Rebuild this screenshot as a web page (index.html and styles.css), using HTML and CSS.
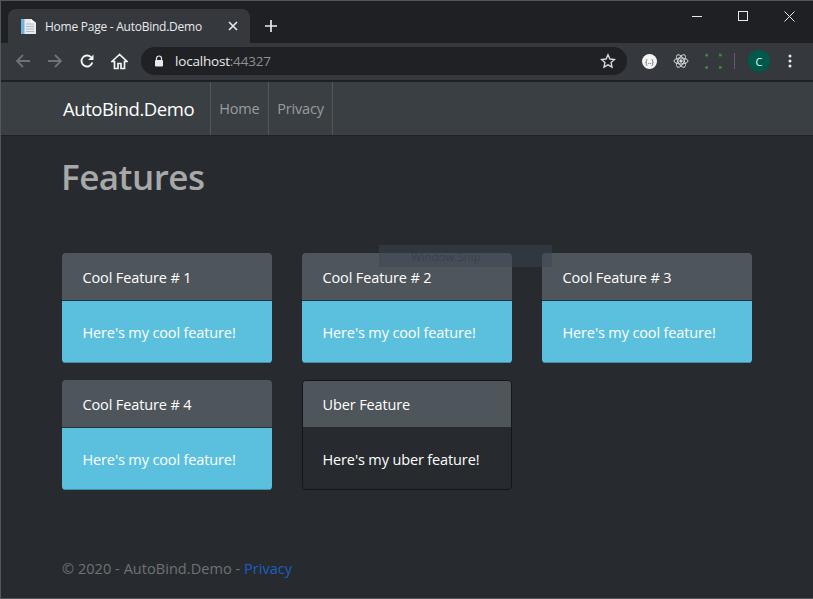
FILE: index.html
```html
<!DOCTYPE html>
<html lang="en">
<head>
<meta charset="utf-8">
<title>Home Page - AutoBind.Demo</title>
<link rel="stylesheet" href="styles.css">
</head>
<body>
<div class="window">
  <header class="tabstrip">
    <div class="tab">
      <svg class="favicon" width="17" height="17" viewBox="0 0 17 17"><path d="M1 1h10l5 4v11H1z" fill="#e8eaed"/><path d="M1 1h3.500v15H1z" fill="#6fb4e0"/><path d="M11 1l5 4h-5z" fill="#fff"/><path d="M6 6h8M6 8.500h8M6 11h8M6 13.500h8" stroke="#b4b8bd" stroke-width="1"/></svg>
      <span class="tab-title">Home Page - AutoBind.Demo</span>
      <svg class="tab-close" width="10" height="10" viewBox="0 0 10 10"><path d="M1 1l8 8M9 1l-8 8" stroke="#e8eaed" stroke-width="1.600"/></svg>
    </div>
    <svg class="new-tab" width="12" height="12" viewBox="0 0 12 12"><path d="M6 0v12M0 6h12" stroke="#e8eaed" stroke-width="1.700"/></svg>
    <div class="window-controls">
      <svg width="11" height="11" viewBox="0 0 11 11"><path d="M0 5.500h10" stroke="#e8eaed" stroke-width="1"/></svg>
      <svg width="11" height="11" viewBox="0 0 11 11"><rect x=".5" y=".5" width="9" height="9" fill="none" stroke="#e8eaed" stroke-width="1"/></svg>
      <svg width="11" height="11" viewBox="0 0 11 11"><path d="M.5.500l10 10M10.500.500l-10 10" stroke="#e8eaed" stroke-width="1"/></svg>
    </div>
  </header>
  <div class="toolbar">
    <svg class="tool-ic" width="16" height="16" viewBox="0 0 16 16"><path d="M15 8H2M8 2L2 8l6 6" fill="none" stroke="#6f7276" stroke-width="1.800"/></svg>
    <svg class="tool-ic" width="16" height="16" viewBox="0 0 16 16"><path d="M1 8h13M8 2l6 6-6 6" fill="none" stroke="#6f7276" stroke-width="1.800"/></svg>
    <svg class="tool-ic" width="16" height="16" viewBox="0 0 16 16"><path d="M13.300 9.500A5.500 5.500 0 1 1 12 4.200" fill="none" stroke="#f1f3f4" stroke-width="1.900"/><path d="M14.500 1.500v5.500H9z" fill="#f1f3f4"/></svg>
    <svg class="tool-ic" width="17" height="17" viewBox="0 0 17 17"><path d="M8.500 1.500L1 8.500h2.500v7H7v-5h3v5h3.500v-7H16z" fill="none" stroke="#f1f3f4" stroke-width="1.700"/></svg>
    <div class="omnibox">
      <svg width="10" height="12" viewBox="0 0 10 12"><path d="M2.500 5V3.500a2.500 2.500 0 0 1 5 0V5" fill="none" stroke="#e8eaed" stroke-width="1.200"/><rect x="1" y="5" width="8" height="6.500" rx="1" fill="#e8eaed"/></svg>
      <span class="url"><span class="host">localhost</span><span class="port">:44327</span></span>
      <svg class="star" width="16" height="16" viewBox="0 0 16 16"><path d="M8 1.800l1.900 4.200 4.600.5-3.400 3.100.9 4.500L8 11.800l-4 2.300.9-4.500L1.500 6.500 6.100 6z" fill="none" stroke="#d8dadd" stroke-width="1.400"/></svg>
    </div>
    <div class="extensions">
      <span class="ext-dot"><span class="ext-dot-text">{..}</span></span>
      <svg width="16" height="16" viewBox="0 0 16 16" fill="none" stroke="#d8dadd" stroke-width="1"><ellipse cx="8" cy="8" rx="7" ry="3"/><ellipse cx="8" cy="8" rx="7" ry="3" transform="rotate(60 8 8)"/><ellipse cx="8" cy="8" rx="7" ry="3" transform="rotate(120 8 8)"/><circle cx="8" cy="8" r="1.200" fill="#d8dadd"/></svg>
      <svg class="ext-frame" width="17" height="17" viewBox="0 0 17 17" fill="none" stroke="#3f8a3c" stroke-width="1.500"><path d="M0 2.500h3M14 2.500h3M0 14.500h3M14 14.500h3M2 .5v3M15 .5v3M2 13v3M15 13v3"/></svg>
      <span class="ext-sep"></span>
      <span class="avatar">C</span>
      <svg class="menu-dots" width="4" height="14" viewBox="0 0 4 14"><circle cx="2" cy="2" r="1.500" fill="#e8eaed"/><circle cx="2" cy="7" r="1.500" fill="#e8eaed"/><circle cx="2" cy="12" r="1.500" fill="#e8eaed"/></svg>
    </div>
  </div>
  <div class="page">
    <nav class="navbar">
      <a class="brand">AutoBind.Demo</a>
      <a class="nav-link">Home</a>
      <a class="nav-link">Privacy</a>
    </nav>
    <main class="content">
      <h1 class="title">Features</h1>
      <div class="cards">
        <section class="card"><div class="card-head">Cool Feature # 1</div><div class="card-body info">Here's my cool feature!</div></section>
        <section class="card"><div class="card-head">Cool Feature # 2</div><div class="card-body info">Here's my cool feature!</div></section>
        <section class="card"><div class="card-head">Cool Feature # 3</div><div class="card-body info">Here's my cool feature!</div></section>
        <section class="card"><div class="card-head">Cool Feature # 4</div><div class="card-body info">Here's my cool feature!</div></section>
        <section class="card uber"><div class="card-head">Uber Feature</div><div class="card-body">Here's my uber feature!</div></section>
      </div>
    </main>
    <footer class="footer">© 2020 - AutoBind.Demo - <a class="footer-link">Privacy</a></footer>
    <div class="snip">Window Snip</div>
  </div>
</div>
</body>
</html>
```

FILE: styles.css
```css
* { box-sizing: border-box; }
html, body { margin: 0; height: 100%; overflow: hidden; background: #272b30; }
body { font-family: "Open Sans", "Noto Sans", sans-serif; }
.window { width: 813px; height: 599px; display: flex; flex-direction: column; border: 1px solid #53565a; border-width: 1px 0 1px 1px; overflow: hidden; }
.tabstrip { height: 42px; flex: none; background: #1f2023; display: flex; align-items: flex-end; padding-left: 7px; }
.tab { width: 242px; height: 34px; background: #35383c; border-radius: 8px 8px 0 0; display: flex; align-items: center; padding: 0 12px; }
.favicon { flex: none; margin-right: 8px; }
.tab-title { flex: 1; font-size: 12px; letter-spacing: -.25px; color: #e8eaed; white-space: nowrap; }
.new-tab { margin: 0 0 11px 15px; }
.window-controls { margin-left: auto; align-self: flex-start; display: flex; gap: 35px; padding: 10px 18px 0 0; }
.toolbar { height: 38px; flex: none; background: #35383c; display: flex; align-items: center; padding: 0 14px 1px; gap: 16px; border-bottom: 1px solid #1e2023; }
.omnibox { width: 486px; height: 28px; margin-left: -3px; border-radius: 14px; background: #202124; display: flex; align-items: center; padding: 0 11px 0 13px; }
.url { flex: 1; margin-left: 11px; font-size: 13.500px; letter-spacing: -.2px; }
.host { color: #e8eaed; }
.port { color: #8d9094; }
.extensions { display: flex; align-items: center; gap: 16px; margin-left: -1px; }
.ext-dot { width: 15px; height: 15px; border-radius: 50%; background: #f4f4f4; display: flex; align-items: center; justify-content: center; }
.ext-dot-text { font-size: 7px; color: #333; line-height: 1; }
.ext-sep { width: 1px; height: 16px; background: #5c5f63; margin-left: -4px; }
.avatar { width: 22px; height: 22px; margin-left: -3px; border-radius: 50%; background: #00594a; color: #dff; font-size: 11px; display: flex; align-items: center; justify-content: center; }
.menu-dots { margin-left: 2px; }
.page { flex: 1; min-height: 0; background: #272b30; display: flex; flex-direction: column; position: relative; }
.navbar { height: 55px; flex: none; display: flex; align-items: stretch; padding-left: 62px; background: #3a3f44; border-top: 1px solid #1f2226; border-bottom: 1px solid #1f2226; }
.brand { align-self: center; font-size: 18.500px; letter-spacing: -.45px; color: #fff; margin-right: 16px; }
.nav-link { display: flex; align-items: center; padding: 0 9px 0 8px; font-size: 14.500px; letter-spacing: -.2px; color: #999c9f; border-left: 1px solid #52575c; }
.nav-link:last-child { border-right: 1px solid #52575c; padding-right: 8px; }
.content { flex: 1; padding: 0 61px; }
.title { margin: 17px 0 52px -1px; font-size: 35px; line-height: 48px; font-weight: 600; letter-spacing: -.5px; color: #a8a8a8; }
.cards { display: grid; grid-template-columns: repeat(3, 210px); column-gap: 30px; row-gap: 17px; }
.card { height: 110px; border-radius: 4px; overflow: hidden; display: flex; flex-direction: column; font-size: 14.500px; letter-spacing: -.13px; color: #fff; }
.card-head { height: 48px; flex: none; padding: 1px 20.500px 0; display: flex; align-items: center; background: #4e555b; border-bottom: 1px solid #1f3442; }
.card-body { flex: 1; padding: 1px 20.500px 0; display: flex; align-items: center; }
.info { background: #5bc0de; border-bottom: 1px solid #3f8fae; }
.uber { border: 1px solid #14161a; background: #272b30; }
.uber .card-head { height: 46px; padding: 1px 19.500px 0; border-bottom: 0; }
.uber .card-body { padding: 3px 19.500px 0; }
.footer { flex: none; padding: 0 0 20px 61px; font-size: 14.500px; letter-spacing: .05px; color: #6e7276; }
.footer-link { color: #1a5fc0; }
.snip { position: absolute; left: 378px; top: 164px; width: 173px; height: 22px; padding-left: 32px; background: rgba(60, 72, 82, .45); color: #3c4148; font-size: 11.500px; display: flex; align-items: center; }
```
